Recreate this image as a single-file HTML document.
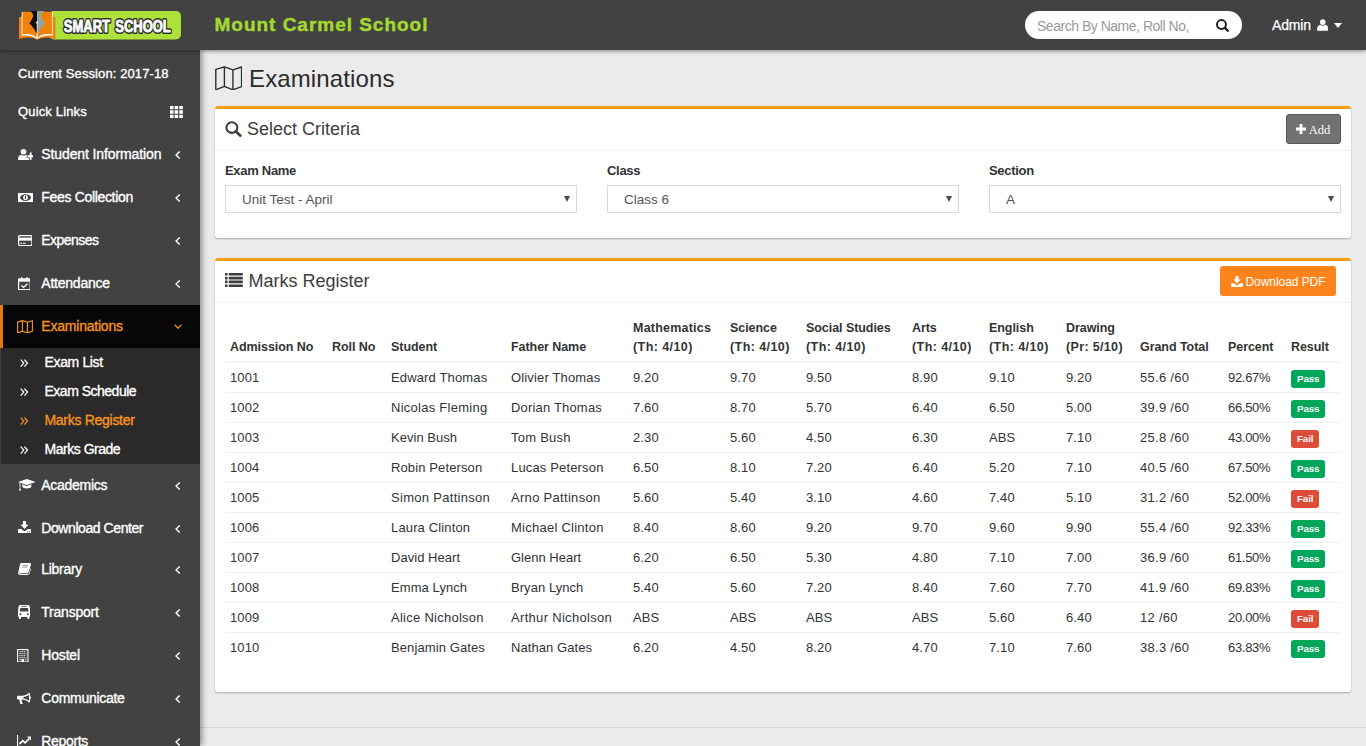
<!DOCTYPE html>
<html lang="en">
<head>
<meta charset="utf-8">
<title>Examinations - Marks Register</title>
<style>
*{box-sizing:border-box}
html,body{margin:0;padding:0}
body{width:1366px;height:746px;overflow:hidden;background:#ebebeb;font-family:"Liberation Sans",Arial,sans-serif;font-size:14px;color:#333;position:relative}
svg{display:block}
/* header */
.hdr{position:absolute;left:0;top:0;width:1366px;height:50px;background:#424242;z-index:5;box-shadow:0 1px 4px rgba(0,0,0,.45)}
.logo{position:absolute;left:19px;top:11px;width:162px;height:29px}
.school{position:absolute;left:214.5px;top:13px;font-size:19px;font-weight:700;color:#a2d830;letter-spacing:.98px;line-height:24px;white-space:nowrap;-webkit-text-stroke:.45px #a2d830}
.search{position:absolute;left:1025px;top:11px;width:217px;height:28px;border-radius:14px;background:#fff}
.search span{position:absolute;left:12px;top:1px;line-height:28px;font-size:14px;color:#9a9a9a;letter-spacing:-.48px;white-space:nowrap}
.search svg{position:absolute;left:191px;top:8px}
.admin{position:absolute;left:1272px;top:0;line-height:50px;color:#fff;font-size:14px;letter-spacing:-.15px;-webkit-text-stroke:.25px #fff}
.hdr .usr{position:absolute;left:1316.5px;top:19.2px}
.hdr .car{position:absolute;left:1334px;top:23px;width:0;height:0;border-left:4.5px solid transparent;border-right:4.5px solid transparent;border-top:5px solid #fff}
/* sidebar */
.side{position:absolute;left:0;top:50px;width:200px;height:696px;background:#424242;color:#fff;z-index:4;box-shadow:2px 0 6px rgba(0,0,0,.42);-webkit-text-stroke:.35px currentColor}
.side .t{position:absolute;left:18px;font-size:14px;line-height:20px;white-space:nowrap;color:#fff}
.mi{position:absolute;left:0;width:200px;height:43px}
.mi .lb{position:absolute;left:41.3px;top:11px;line-height:20px;font-size:14px;white-space:nowrap}
.mi .ic{position:absolute;left:17px;top:13px}
.mi .ar{position:absolute;left:174px;top:16px}
.mi.act{background:#070707;color:#f7941d}
.mi.act:before{content:"";position:absolute;left:0;top:0;width:3px;height:100%;background:#e27b13}
.sub{position:absolute;left:1px;top:298px;width:199px;height:116px;background:#2a2a2a}
.sub div{position:absolute;left:43.5px;line-height:20px;font-size:14px;white-space:nowrap}
.sub svg{position:absolute;left:19.4px}
/* content */
.h1{position:absolute;left:249px;top:63px;font-size:24px;line-height:32px;color:#2b2b2b;white-space:nowrap;letter-spacing:.12px}
.h1i{position:absolute;left:214.8px;top:65.8px}
.box{position:absolute;left:215px;width:1136px;background:#fff;border-radius:3px;box-shadow:0 1px 2px rgba(0,0,0,.28)}
.box:before{content:"";position:absolute;left:0;top:0;width:100%;height:3px;background:#f99d17;border-radius:3px 3px 0 0}
.box .bh{position:absolute;left:0;top:3px;width:100%;height:42px;border-bottom:1px solid #f1f1f1}
.box .bt{position:absolute;left:32px;top:11px;font-size:18px;line-height:24px;color:#3d3d3d;white-space:nowrap}
.lab{position:absolute;top:56px;font-weight:700;font-size:13px;line-height:18px;color:#333;white-space:nowrap;letter-spacing:-.3px}
.sel{position:absolute;top:79px;width:352px;height:28px;border:1px solid #d2d6de;background:#fff}
.sel span{position:absolute;left:16px;top:0;line-height:27px;font-size:13.5px;color:#555;white-space:nowrap}
.sel i{position:absolute;right:6px;top:10px;width:0;height:0;border-left:3.5px solid transparent;border-right:3.5px solid transparent;border-top:6px solid #4a4a4a}
.btn-add{position:absolute;left:1071px;top:8px;width:55px;height:30px;background:#727272;border:1px solid #555;border-radius:3px;color:#fff;font-family:"Liberation Serif","Times New Roman",serif;font-size:12.5px;line-height:28px;white-space:nowrap}
.btn-pdf{position:absolute;left:1005px;top:8px;width:116px;height:30px;background:#fd841d;border-radius:3px;color:#fff;font-size:12px;line-height:30px;white-space:nowrap}
table{position:absolute;left:10px;top:52px;width:1116px;border-collapse:collapse;table-layout:fixed;font-size:13px}
th,td{padding:0 5px;text-align:left;white-space:nowrap;overflow:visible}
th{font-weight:700;vertical-align:bottom;line-height:19px;padding-bottom:4px;height:52px;border-bottom:2px solid #f4f4f4;color:#333;font-size:12.5px;letter-spacing:-.06px}
td{height:30px;line-height:20px;padding-top:2px;border-top:1px solid #f0f0f0;color:#333;letter-spacing:.12px}
tr:first-child td{border-top:0}
.bd{display:inline-block;height:18px;line-height:18px;padding:0 6px;border-radius:3px;color:#fff;font-size:9.75px;font-weight:700;vertical-align:middle;position:relative;top:0;letter-spacing:-.1px}
.w{letter-spacing:.42px}
td:nth-child(12){letter-spacing:-.3px}td:nth-child(11){letter-spacing:.28px}
.ps{background:#00a65a}.fl{background:#dd4b39}
.foot{position:absolute;left:200px;top:727px;width:1166px;height:19px;border-top:1px solid #d2d6de;background:#ebebeb}
</style>
</head>
<body>
<div class="hdr">
<svg class="logo" width="162" height="29" viewBox="0 0 162 29">
<rect x="30" y="0" width="132" height="28.5" rx="5" fill="#ade038"/>
<path d="M0 6.4 L3.4 5.2 L3.4 22 L33 22 L33 5.2 L36.4 6.4 L36.4 28 C30 25.8 23.5 26 18.2 28.8 C13 26 6.4 25.8 0 28Z" fill="#f0810b"/>
<path d="M2.7 1 L2.7 24.8 C8.5 23.7 14 24.8 18.2 28.1 C22.4 24.8 27.9 23.7 33.7 24.8 L33.7 1Z" fill="#fff"/>
<path d="M11 0 L18.2 0 L18.2 23 L9 14Z" fill="#0d0d0d"/>
<path d="M18.2 0 L25.4 0 L27.4 14 L18.2 23Z" fill="#96a3a4"/>
<path d="M18.2 3.4 L24.5 3.4" stroke="#9ed030" stroke-width=".7"/>
<path d="M18.1 11.5 L18.1 23" stroke="#e8e8e8" stroke-width=".7"/>
<circle cx="18" cy="11.4" r="1" fill="#fff"/>
<path d="M3.5 .7 L12.3 .7 C14.6 3 14.4 5.4 13.4 7.2 L10.4 12.5 C14 15.5 16.4 19.3 17.6 23.2 L17.6 26.4 C13.8 23.4 8.6 22.5 3.5 23.4Z" fill="#f0810b"/>
<path d="M32.9 .7 L24.1 .7 C21.8 3 22 5.4 23 7.2 L26 12.5 C22.4 15.5 20 19.3 18.8 23.2 L18.8 26.4 C22.6 23.4 27.8 22.5 32.9 23.4Z" fill="#f0810b"/>
<text x="98.3" y="20.9" text-anchor="middle" textLength="107" lengthAdjust="spacingAndGlyphs" font-family="Liberation Sans, Arial, sans-serif" word-spacing="2.2" font-weight="700" font-size="17.2" fill="#2a2a2a" stroke="#2a2a2a" stroke-width="4" stroke-linejoin="round">SMART SCHOOL</text>
<text x="98.3" y="20.9" text-anchor="middle" textLength="107" lengthAdjust="spacingAndGlyphs" font-family="Liberation Sans, Arial, sans-serif" word-spacing="2.2" font-weight="700" font-size="17.2" fill="#fff" stroke="#fff" stroke-width=".9" stroke-linejoin="round">SMART SCHOOL</text>
</svg>
<div class="school">Mount Carmel School</div>
<div class="search"><span>Search By Name, Roll No,</span>
<svg width="13" height="13" viewBox="0 0 14 14"><circle cx="5.9" cy="5.9" r="4.8" fill="none" stroke="#1c1c1c" stroke-width="2.1"/><path d="M9.6 9.6 L12.7 12.7" stroke="#1c1c1c" stroke-width="2.5" stroke-linecap="round"/></svg></div>
<div class="admin">Admin</div>
<svg class="usr" width="11.5" height="11.8" viewBox="0 0 12 12" preserveAspectRatio="none"><circle cx="6" cy="3.1" r="2.9" fill="#fff"/><path d="M.8 12 C.3 12 0 11.6 0 11 C0 8 1.5 6 3.4 5.8 C4.1 6.4 5 6.8 6 6.8 C7 6.8 7.9 6.4 8.6 5.8 C10.5 6 12 8 12 11 C12 11.6 11.7 12 11.2 12Z" fill="#fff"/></svg>
<div class="car"></div>
</div>
<div class="side">
<div class="t" style="top:13.7px;font-size:13px;letter-spacing:0.102px">Current Session: 2017-18</div>
<div class="t" style="top:51.7px;font-size:13px;letter-spacing:0.154px">Quick Links</div>
<svg width="12.8" height="12" viewBox="0 0 12 12" preserveAspectRatio="none" style="position:absolute;left:169.8px;top:56.2px"><path d="M0 0H3.3V3.3H0Z M4.35 0H7.65V3.3H4.35Z M8.7 0H12V3.3H8.7Z M0 4.35H3.3V7.65H0Z M4.35 4.35H7.65V7.65H4.35Z M8.7 4.35H12V7.65H8.7Z M0 8.7H3.3V12H0Z M4.35 8.7H7.65V12H4.35Z M8.7 8.7H12V12H8.7Z" fill="#fff"/></svg>
<div class="mi" style="top:83px"><svg width="15.7" height="11.5" viewBox="0 0 16 12" preserveAspectRatio="none" style="position:absolute;left:17.5px;top:15.5px"><circle cx="5.6" cy="2.9" r="2.9" fill="#fff"/><path d="M.9 12 C.3 12 0 11.6 0 11 C0 8.2 1.2 6.2 3.1 6 C3.8 6.6 4.7 6.9 5.6 6.9 C6.5 6.9 7.4 6.6 8.1 6 C10 6.2 11.2 8.2 11.2 11 C11.2 11.6 10.9 12 10.3 12Z" fill="#fff"/><path d="M12.9 3.2 V11.6 M9 7.5 H16" stroke="#424242" stroke-width="3.4"/><path d="M12.9 3.7 V11.3 M9.7 7.5 H16" stroke="#fff" stroke-width="2"/></svg><span class="lb" style="letter-spacing:-0.115px">Student Information</span><svg width="5.4" height="8" viewBox="0 0 5.4 8" style="position:absolute;left:175px;top:17.7px"><path d="M4.7 .5 L1 4 L4.7 7.5" fill="none" stroke="#fff" stroke-width="1.35"/></svg></div>
<div class="mi" style="top:126px"><svg width="15" height="9.1" viewBox="0 0 15 9" preserveAspectRatio="none" style="position:absolute;left:17.5px;top:16.7px"><rect x="0" y="0" width="15" height="9" fill="#fff"/><ellipse cx="7.5" cy="4.5" rx="5.4" ry="3.3" fill="#424242"/><ellipse cx="7.5" cy="4.5" rx="2.3" ry="2.6" fill="#fff"/><path d="M7.5 2.8 V6.3" stroke="#424242" stroke-width="1"/><circle cx="1" cy="1" r="1.2" fill="#424242" opacity=".0"/></svg><span class="lb" style="letter-spacing:-0.327px">Fees Collection</span><svg width="5.4" height="8" viewBox="0 0 5.4 8" style="position:absolute;left:175px;top:17.7px"><path d="M4.7 .5 L1 4 L4.7 7.5" fill="none" stroke="#fff" stroke-width="1.35"/></svg></div>
<div class="mi" style="top:169px"><svg width="14.5" height="11.1" viewBox="0 0 14.5 11" preserveAspectRatio="none" style="position:absolute;left:17.7px;top:15.7px"><rect x=".6" y=".6" width="13.3" height="9.8" rx="1" fill="none" stroke="#fff" stroke-width="1.2"/><rect x=".6" y="2.6" width="13.3" height="3" fill="#fff"/><rect x="2.2" y="7.7" width="1.8" height="1" fill="#fff"/><rect x="4.8" y="7.7" width="2.8" height="1" fill="#fff"/></svg><span class="lb" style="letter-spacing:-0.536px">Expenses</span><svg width="5.4" height="8" viewBox="0 0 5.4 8" style="position:absolute;left:175px;top:17.7px"><path d="M4.7 .5 L1 4 L4.7 7.5" fill="none" stroke="#fff" stroke-width="1.35"/></svg></div>
<div class="mi" style="top:212px"><svg width="12.8" height="13.3" viewBox="0 0 13 13.4" preserveAspectRatio="none" style="position:absolute;left:17.7px;top:14.7px"><rect x=".6" y="1.8" width="11.8" height="11" rx=".8" fill="none" stroke="#fff" stroke-width="1.2"/><rect x=".6" y="2.2" width="11.8" height="2.5" fill="#fff"/><rect x="3" y="0" width="1.6" height="3" rx=".8" fill="#fff"/><rect x="8.4" y="0" width="1.6" height="3" rx=".8" fill="#fff"/><path d="M3.6 8.6 L5.7 10.5 L9.6 6.8" fill="none" stroke="#fff" stroke-width="1.3"/></svg><span class="lb" style="letter-spacing:-0.224px">Attendance</span><svg width="5.4" height="8" viewBox="0 0 5.4 8" style="position:absolute;left:175px;top:17.7px"><path d="M4.7 .5 L1 4 L4.7 7.5" fill="none" stroke="#fff" stroke-width="1.35"/></svg></div>
<div class="mi act" style="top:255px"><svg width="16" height="13.5" viewBox="0 0 16 13.5" preserveAspectRatio="none" style="position:absolute;left:17.2px;top:14.7px"><path d="M.6 2.1 L5.4 .6 L10.4 2.3 L15.4 .7 V11.2 L10.4 12.9 L5.4 11.2 L.6 12.9Z M5.4 .6 V11.2 M10.4 2.3 V12.9" fill="none" stroke="#f7941d" stroke-width="1.15" stroke-linejoin="round"/></svg><span class="lb" style="letter-spacing:-0.212px">Examinations</span><svg width="8" height="5.2" viewBox="0 0 8 5.2" style="position:absolute;left:173.6px;top:18.7px"><path d="M.6 .6 L4 4.2 L7.4 .6" fill="none" stroke="#f7941d" stroke-width="1.3"/></svg></div>
<div class="sub">
<svg width="8.4" height="8.2" viewBox="0 0 8.4 8.2" style="top:10.6px"><path d="M.7 .6 L3.8 4.1 L.7 7.6 M4.4 .6 L7.5 4.1 L4.4 7.6" fill="none" stroke="#fff" stroke-width="1.25"/></svg><div style="top:4px;color:#fff;letter-spacing:-0.352px">Exam List</div>
<svg width="8.4" height="8.2" viewBox="0 0 8.4 8.2" style="top:39.6px"><path d="M.7 .6 L3.8 4.1 L.7 7.6 M4.4 .6 L7.5 4.1 L4.4 7.6" fill="none" stroke="#fff" stroke-width="1.25"/></svg><div style="top:33px;color:#fff;letter-spacing:-0.497px">Exam Schedule</div>
<svg width="8.4" height="8.2" viewBox="0 0 8.4 8.2" style="top:68.6px"><path d="M.7 .6 L3.8 4.1 L.7 7.6 M4.4 .6 L7.5 4.1 L4.4 7.6" fill="none" stroke="#f7941d" stroke-width="1.25"/></svg><div style="top:62px;color:#f7941d;letter-spacing:-0.289px">Marks Register</div>
<svg width="8.4" height="8.2" viewBox="0 0 8.4 8.2" style="top:97.6px"><path d="M.7 .6 L3.8 4.1 L.7 7.6 M4.4 .6 L7.5 4.1 L4.4 7.6" fill="none" stroke="#fff" stroke-width="1.25"/></svg><div style="top:91px;color:#fff;letter-spacing:-0.475px">Marks Grade</div>
</div>
<div class="mi" style="top:414px"><svg width="17.6" height="11.6" viewBox="0 0 17.6 11.6" preserveAspectRatio="none" style="position:absolute;left:17.5px;top:15.2px"><path d="M8.8 0 L17.6 3 L8.8 6 L0 3Z" fill="#fff"/><path d="M4.3 5.3 L8.8 6.9 L13.3 5.3 V7.6 C13.3 8.8 11.2 9.6 8.8 9.6 C6.4 9.6 4.3 8.8 4.3 7.6Z" fill="#fff"/><path d="M2 3.8 V8" stroke="#fff" stroke-width=".9"/><path d="M2 7.6 L3 11.6 H1Z" fill="#fff"/></svg><span class="lb" style="letter-spacing:-0.274px">Academics</span><svg width="5.4" height="8" viewBox="0 0 5.4 8" style="position:absolute;left:175px;top:17.7px"><path d="M4.7 .5 L1 4 L4.7 7.5" fill="none" stroke="#fff" stroke-width="1.35"/></svg></div>
<div class="mi" style="top:457px"><svg width="13" height="12.1" viewBox="0 0 13 12" preserveAspectRatio="none" style="position:absolute;left:17.5px;top:14.2px"><path d="M4.9 0 H8.1 V3.7 H10.6 L6.5 7.9 L2.4 3.7 H4.9Z" fill="#fff"/><path d="M.7 7.9 H3.3 L4.7 9.3 C5.7 10.2 7.3 10.2 8.3 9.3 L9.7 7.9 H12.3 C12.7 7.9 13 8.2 13 8.6 V11.3 C13 11.7 12.7 12 12.3 12 H.7 C.3 12 0 11.7 0 11.3 V8.6 C0 8.2 .3 7.9 .7 7.9Z" fill="#fff"/><circle cx="9.6" cy="10.6" r=".55" fill="#424242"/><circle cx="11.5" cy="10.6" r=".55" fill="#424242"/></svg><span class="lb" style="letter-spacing:-0.425px">Download Center</span><svg width="5.4" height="8" viewBox="0 0 5.4 8" style="position:absolute;left:175px;top:17.7px"><path d="M4.7 .5 L1 4 L4.7 7.5" fill="none" stroke="#fff" stroke-width="1.35"/></svg></div>
<div class="mi" style="top:498px"><svg width="13.1" height="11.9" viewBox="0 0 13 12" preserveAspectRatio="none" style="position:absolute;left:17.7px;top:15.2px"><path d="M3.4 0 H12 C12.8 0 13.2 .6 12.9 1.4 L10.6 9 C10.3 9.9 9.6 10.3 8.8 10.3 H1.9 C1.4 10.3 1.2 10.6 1.3 10.9 C1.4 11.1 1.7 11.2 2 11.2 H9.4 C10.2 11.2 10.8 10.7 11 10 L12.4 5.4 L12.9 5.9 L11.6 10.4 C11.3 11.5 10.5 12 9.4 12 H1.7 C.6 12 -.2 11.1 .1 10 L2 1.6 C2.2 .6 2.7 0 3.4 0Z" fill="#fff"/><path d="M4.6 2.5 H10 M4.2 4.2 H9.6" stroke="#424242" stroke-width=".7" opacity=".75"/></svg><span class="lb" style="letter-spacing:-0.3px">Library</span><svg width="5.4" height="8" viewBox="0 0 5.4 8" style="position:absolute;left:175px;top:17.7px"><path d="M4.7 .5 L1 4 L4.7 7.5" fill="none" stroke="#fff" stroke-width="1.35"/></svg></div>
<div class="mi" style="top:541px"><svg width="12.3" height="14.3" viewBox="0 0 12.3 14.3" preserveAspectRatio="none" style="position:absolute;left:17.5px;top:14.0px"><path d="M2.7 0 H9.6 C11 0 11.7 .9 11.9 2.2 L12.3 7.6 V11.4 H11.4 V13 C11.4 13.8 11 14.3 10.4 14.3 C9.8 14.3 9.4 13.8 9.4 13 V12 H2.9 V13 C2.9 13.8 2.5 14.3 1.9 14.3 C1.3 14.3 .9 13.8 .9 13 V11.4 H0 V7.6 L.4 2.2 C.6 .9 1.3 0 2.7 0Z" fill="#fff"/><path d="M2.3 3 H10 L10.4 6.6 H1.9Z" fill="#424242"/><path d="M3.4 1.4 H8.9" stroke="#424242" stroke-width=".8"/><circle cx="2.5" cy="9.2" r="1" fill="#424242"/><circle cx="9.8" cy="9.2" r="1" fill="#424242"/></svg><span class="lb" style="letter-spacing:-0.221px">Transport</span><svg width="5.4" height="8" viewBox="0 0 5.4 8" style="position:absolute;left:175px;top:17.7px"><path d="M4.7 .5 L1 4 L4.7 7.5" fill="none" stroke="#fff" stroke-width="1.35"/></svg></div>
<div class="mi" style="top:584px"><svg width="11.5" height="13.5" viewBox="0 0 11.5 13.5" preserveAspectRatio="none" style="position:absolute;left:17.4px;top:14.5px"><rect x=".55" y=".55" width="10.4" height="12.4" fill="none" stroke="#fff" stroke-width="1.1"/><path d="M2.4 2.6 H3.6 M4.5 2.6 H5.7 M6.6 2.6 H7.8 M8.7 2.6 H9.3 M2.4 4.6 H3.6 M4.5 4.6 H5.7 M6.6 4.6 H7.8 M8.7 4.6 H9.3 M2.4 6.6 H3.6 M4.5 6.6 H5.7 M6.6 6.6 H7.8 M8.7 6.6 H9.3 M2.4 8.6 H3.6 M4.5 8.6 H5.7 M6.6 8.6 H7.8 M8.7 8.6 H9.3 M2.4 10.6 H3.6 M8 10.6 H9.2" stroke="#fff" stroke-width="1.1" opacity=".85"/><rect x="4.4" y="10" width="2.7" height="3" fill="#fff"/></svg><span class="lb" style="letter-spacing:-0.181px">Hostel</span><svg width="5.4" height="8" viewBox="0 0 5.4 8" style="position:absolute;left:175px;top:17.7px"><path d="M4.7 .5 L1 4 L4.7 7.5" fill="none" stroke="#fff" stroke-width="1.35"/></svg></div>
<div class="mi" style="top:627px"><svg width="14.2" height="11.5" viewBox="0 0 14.2 11.5" preserveAspectRatio="none" style="position:absolute;left:17.4px;top:15.5px"><path d="M12 0 C12.7 0 13.1 .4 13.1 1 V3.4 C13.8 3.6 14.2 4.1 14.2 4.7 C14.2 5.3 13.8 5.8 13.1 6 V8.4 C13.1 9 12.7 9.4 12 9.4 C9.8 7.6 7.6 6.8 5.3 6.6 C4.6 6.9 4.4 7.6 4.9 8.1 C4.5 8.9 5.1 9.6 5.9 10.2 C5.5 11.1 4.1 11.3 3.3 10.7 C2.9 9.4 2.4 8.2 2.7 6.6 H1.2 C.5 6.6 0 6.1 0 5.4 V4 C0 3.3 .5 2.8 1.2 2.8 H5 C7.4 2.8 9.8 1.8 12 0Z" fill="#fff"/><path d="M12 1.7 C10.4 3 8.4 3.8 6.4 4 V5.4 C8.4 5.6 10.4 6.4 12 7.7Z" fill="#424242"/></svg><span class="lb" style="letter-spacing:-0.28px">Communicate</span><svg width="5.4" height="8" viewBox="0 0 5.4 8" style="position:absolute;left:175px;top:17.7px"><path d="M4.7 .5 L1 4 L4.7 7.5" fill="none" stroke="#fff" stroke-width="1.35"/></svg></div>
<div class="mi" style="top:670px"><svg width="15.3" height="12" viewBox="0 0 15.3 12" preserveAspectRatio="none" style="position:absolute;left:17.4px;top:15.3px"><path d="M.55 0 V11.45 H15.3" fill="none" stroke="#fff" stroke-width="1.1"/><path d="M2.4 9.2 L5.8 5.6 L8 7.8 L12.2 3.6" fill="none" stroke="#fff" stroke-width="1.7"/><path d="M10 1.6 H14 V5.6Z" fill="#fff"/></svg><span class="lb" style="letter-spacing:-0.333px">Reports</span><svg width="5.4" height="8" viewBox="0 0 5.4 8" style="position:absolute;left:175px;top:17.7px"><path d="M4.7 .5 L1 4 L4.7 7.5" fill="none" stroke="#fff" stroke-width="1.35"/></svg></div>
</div>
<svg class="h1i" width="27.4" height="24.6" viewBox="0 0 27.4 24.6"><path d="M.8 3.4 L9.4 .8 L17.9 3.9 L26.6 1 V20.6 L17.9 23.8 L9.4 20.5 L.8 23.8Z M9.4 .8 V20.5 M17.9 3.9 V23.8" fill="none" stroke="#2b2b2b" stroke-width="1.35" stroke-linejoin="round"/></svg>
<div class="h1">Examinations</div>
<div class="box" style="top:106px;height:132px">
<div class="bh"></div>
<svg width="16.7" height="16" viewBox="0 0 17 17" preserveAspectRatio="none" style="position:absolute;left:10px;top:15.3px"><circle cx="7" cy="7" r="5.6" fill="none" stroke="#3d3d3d" stroke-width="2.2"/><path d="M11.2 11.2 L15.6 15.6" stroke="#3d3d3d" stroke-width="2.8" stroke-linecap="round"/></svg>
<div class="bt">Select Criteria</div>
<div class="btn-add"><svg width="10" height="10" viewBox="0 0 10 10" style="position:absolute;left:9px;top:9px"><path d="M5 0 V10 M0 5 H10" stroke="#fff" stroke-width="2.8"/></svg><span style="position:absolute;left:21.8px;top:1px">Add</span></div>
<div class="lab" style="left:10px">Exam Name</div>
<div class="lab" style="left:392px">Class</div>
<div class="lab" style="left:774px">Section</div>
<div class="sel" style="left:10px"><span>Unit Test - April</span><i></i></div>
<div class="sel" style="left:392px"><span>Class 6</span><i></i></div>
<div class="sel" style="left:774px"><span>A</span><i></i></div>
</div>
<div class="box" style="top:258px;height:434px">
<div class="bh"></div>
<svg width="17.8" height="14" viewBox="0 0 17.8 14" style="position:absolute;left:10px;top:15px"><path d="M0 1.3 H2.6 M3.8 1.3 H17.8 M0 5.1 H2.6 M3.8 5.1 H17.8 M0 8.9 H2.6 M3.8 8.9 H17.8 M0 12.7 H2.6 M3.8 12.7 H17.8" stroke="#3d3d3d" stroke-width="2.6"/></svg>
<div class="bt" style="left:33.4px">Marks Register</div>
<div class="btn-pdf"><svg width="12" height="11" viewBox="0 0 15 14" preserveAspectRatio="none" style="position:absolute;left:11px;top:9.5px"><path d="M5.6 0 H9.4 V4.4 H12.2 L7.5 9.2 L2.8 4.4 H5.6Z" fill="#fff"/><path d="M.8 9.3 H4 L5.6 10.9 C6.6 11.9 8.4 11.9 9.4 10.9 L11 9.3 H14.2 C14.7 9.3 15 9.6 15 10.1 V13.2 C15 13.7 14.7 14 14.2 14 H.8 C.3 14 0 13.7 0 13.2 V10.1 C0 9.6 .3 9.3 .8 9.3Z" fill="#fff"/></svg><span style="position:absolute;left:25.5px;top:1px;letter-spacing:-.06px">Download PDF</span></div>
<table><colgroup><col style="width:102px"><col style="width:59px"><col style="width:120px"><col style="width:122px"><col style="width:97px"><col style="width:76px"><col style="width:106px"><col style="width:77px"><col style="width:77px"><col style="width:74px"><col style="width:88px"><col style="width:63px"><col style="width:55px"></colgroup>
<thead><tr><th>Admission No</th><th>Roll No</th><th>Student</th><th>Father Name</th><th><span style="letter-spacing:.22px">Mathematics</span><br><span class="w">(Th: 4/10)</span></th><th>Science<br><span class="w">(Th: 4/10)</span></th><th>Social Studies<br><span class="w">(Th: 4/10)</span></th><th>Arts<br><span class="w">(Th: 4/10)</span></th><th>English<br><span class="w">(Th: 4/10)</span></th><th>Drawing<br><span class="w" style="letter-spacing:.34px">(Pr: 5/10)</span></th><th>Grand Total</th><th>Percent</th><th>Result</th></tr></thead><tbody>
<tr><td>1001</td><td></td><td style="letter-spacing:0.148px">Edward Thomas</td><td style="letter-spacing:0.155px">Olivier Thomas</td><td>9.20</td><td>9.70</td><td>9.50</td><td>8.90</td><td>9.10</td><td>9.20</td><td>55.6 /60</td><td>92.67%</td><td><span class="bd ps">Pass</span></td></tr>
<tr><td>1002</td><td></td><td style="letter-spacing:0.265px">Nicolas Fleming</td><td style="letter-spacing:0.180px">Dorian Thomas</td><td>7.60</td><td>8.70</td><td>5.70</td><td>6.40</td><td>6.50</td><td>5.00</td><td>39.9 /60</td><td>66.50%</td><td><span class="bd ps">Pass</span></td></tr>
<tr><td>1003</td><td></td><td style="letter-spacing:0.037px">Kevin Bush</td><td style="letter-spacing:0.255px">Tom Bush</td><td>2.30</td><td>5.60</td><td>4.50</td><td>6.30</td><td>ABS</td><td>7.10</td><td>25.8 /60</td><td>43.00%</td><td><span class="bd fl">Fail</span></td></tr>
<tr><td>1004</td><td></td><td style="letter-spacing:0.121px">Robin Peterson</td><td style="letter-spacing:0.158px">Lucas Peterson</td><td>6.50</td><td>8.10</td><td>7.20</td><td>6.40</td><td>5.20</td><td>7.10</td><td>40.5 /60</td><td>67.50%</td><td><span class="bd ps">Pass</span></td></tr>
<tr><td>1005</td><td></td><td style="letter-spacing:0.295px">Simon Pattinson</td><td style="letter-spacing:0.301px">Arno Pattinson</td><td>5.60</td><td>5.40</td><td>3.10</td><td>4.60</td><td>7.40</td><td>5.10</td><td>31.2 /60</td><td>52.00%</td><td><span class="bd fl">Fail</span></td></tr>
<tr><td>1006</td><td></td><td style="letter-spacing:0.148px">Laura Clinton</td><td style="letter-spacing:0.252px">Michael Clinton</td><td>8.40</td><td>8.60</td><td>9.20</td><td>9.70</td><td>9.60</td><td>9.90</td><td>55.4 /60</td><td>92.33%</td><td><span class="bd ps">Pass</span></td></tr>
<tr><td>1007</td><td></td><td style="letter-spacing:0.046px">David Heart</td><td style="letter-spacing:0.001px">Glenn Heart</td><td>6.20</td><td>6.50</td><td>5.30</td><td>4.80</td><td>7.10</td><td>7.00</td><td>36.9 /60</td><td>61.50%</td><td><span class="bd ps">Pass</span></td></tr>
<tr><td>1008</td><td></td><td style="letter-spacing:0.079px">Emma Lynch</td><td style="letter-spacing:0.052px">Bryan Lynch</td><td>5.40</td><td>5.60</td><td>7.20</td><td>8.40</td><td>7.60</td><td>7.70</td><td>41.9 /60</td><td>69.83%</td><td><span class="bd ps">Pass</span></td></tr>
<tr><td>1009</td><td></td><td style="letter-spacing:0.266px">Alice Nicholson</td><td style="letter-spacing:0.313px">Arthur Nicholson</td><td>ABS</td><td>ABS</td><td>ABS</td><td>ABS</td><td>5.60</td><td>6.40</td><td>12 /60</td><td>20.00%</td><td><span class="bd fl">Fail</span></td></tr>
<tr><td>1010</td><td></td><td style="letter-spacing:0.100px">Benjamin Gates</td><td style="letter-spacing:0.080px">Nathan Gates</td><td>6.20</td><td>4.50</td><td>8.20</td><td>4.70</td><td>7.10</td><td>7.60</td><td>38.3 /60</td><td>63.83%</td><td><span class="bd ps">Pass</span></td></tr>
</tbody></table>
</div>
<div class="foot"></div>
</body>
</html>
